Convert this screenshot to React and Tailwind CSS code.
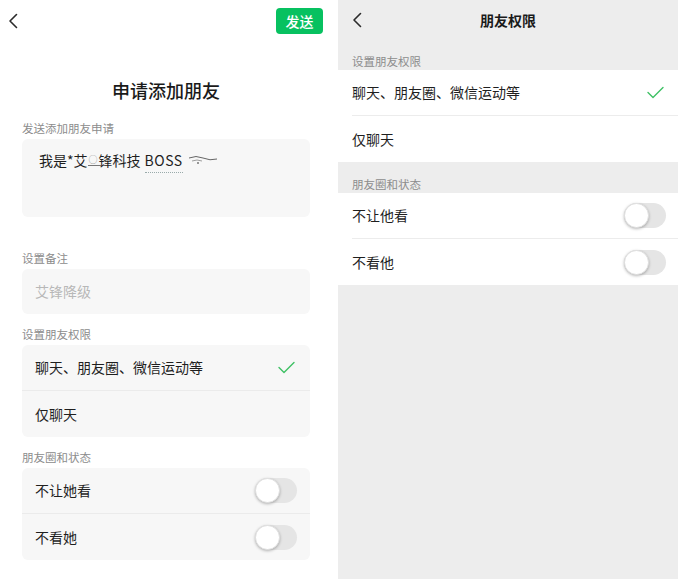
const font = { fontFamily: '"Noto Sans CJK SC", "Noto Sans", sans-serif' }

function Chevron() {
    return (
        <svg width="10" height="16" viewBox="0 0 10 16" fill="none">
            <path d="M8.5 1.5 L2 8 L8.5 14.5" stroke="#2b2b2b" strokeWidth="1.6" strokeLinecap="round" strokeLinejoin="round" />
        </svg>
    )
}

function Check() {
    return (
        <svg width="17" height="13" viewBox="0 0 17 13" fill="none">
            <path d="M1 6.5 L6 11.5 L16 1.5" stroke="#3fc165" strokeWidth="1.4" strokeLinecap="round" strokeLinejoin="round" />
        </svg>
    )
}

function Toggle() {
    return (
        <div className="w-[42px] h-[25px] rounded-full bg-[#e5e5e5] flex items-center">
            <div className="w-[25px] h-[25px] rounded-full bg-white shadow-[0_1px_3px_rgba(0,0,0,0.28)] border border-[#e0e0e0]" />
        </div>
    )
}

function Label({ children }) {
    return <div className="h-[16px] leading-[16px] text-[11.5px] text-[#8c8c8c] mb-[3px]">{children}</div>
}

function LeftRow({ text, right, divider }) {
    return (
        <div className={"h-[46px] flex items-center justify-between pl-[13px] pr-[13px] " + (divider ? "border-b border-[#ebebeb]" : "")}>
            <span className="text-[14px] text-[#1f1f1f]">{text}</span>
            {right}
        </div>
    )
}

function RightRow({ text, right, divider }) {
    return (
        <div className="pl-[14px]">
            <div className={"h-[46px] flex items-center justify-between pr-[12px] " + (divider ? "border-b border-[#ececec]" : "")}>
                <span className="text-[14px] text-[#1f1f1f]">{text}</span>
                {right}
            </div>
        </div>
    )
}

export default function App() {
    return (
        <div className="w-[678px] h-[579px] flex bg-white overflow-hidden" style={font}>
            <div className="w-[338px] h-full bg-white flex flex-col">
                <div className="h-[42px] flex items-start justify-between pl-[8px] pr-[15px]">
                    <div className="mt-[13px]"><Chevron /></div>
                    <button className="mt-[8px] w-[47px] h-[26px] rounded-[4px] bg-[#07c160] text-white text-[14px] font-medium">
                        发送
                    </button>
                </div>

                <div className="mt-[35px] h-[26px] leading-[26px] text-center pr-[6px] text-[18px] font-medium text-[#1a1a1a]">
                    申请添加朋友
                </div>

                <div className="pl-[22px] pr-[28px] mt-[17px] flex flex-col">
                    <Label>发送添加朋友申请</Label>
                    <div className="h-[78px] rounded-[6px] bg-[#f7f7f7] pt-[11px] pl-[17px]">
                        <div className="flex items-center h-[20px] text-[14px] text-[#1f1f1f]">
                            <span>我是*艾</span>
                            <span className="relative inline-flex items-center">
                                <span className="text-[9px] text-[#999] px-[1px]">○</span>
                                <span className="absolute left-0 right-[-2px] bottom-[1px] border-b border-[#777]" />
                            </span>
                            <span>锋科技 </span>
                            <span className="relative ml-[4px] tracking-[0.5px]">
                                BOSS
                                <span className="absolute left-0 right-0 bottom-[-2px] border-b border-dotted border-[#9aa]" />
                            </span>
                            <svg width="30" height="12" viewBox="0 0 30 12" className="ml-[5px]">
                                <path d="M1 4 Q8 1 15 4 T29 5" stroke="#666" strokeWidth="1" fill="none" />
                                <path d="M4 7 Q9 5 14 7" stroke="#888" strokeWidth="0.8" fill="none" />
                                <circle cx="10" cy="9" r="1" fill="#777" />
                            </svg>
                        </div>
                    </div>

                    <div className="mt-[33px]">
                        <Label>设置备注</Label>
                    </div>
                    <div className="h-[45px] rounded-[6px] bg-[#f7f7f7] pl-[13px] flex items-center">
                        <span className="text-[14px] text-[#b8b8b8]">艾锋降级</span>
                    </div>

                    <div className="mt-[12px]">
                        <Label>设置朋友权限</Label>
                    </div>
                    <div className="rounded-[6px] bg-[#f7f7f7] flex flex-col">
                        <LeftRow text="聊天、朋友圈、微信运动等" right={<span className="mr-[2px]"><Check /></span>} divider />
                        <LeftRow text="仅聊天" />
                    </div>

                    <div className="mt-[12px]">
                        <Label>朋友圈和状态</Label>
                    </div>
                    <div className="rounded-[6px] bg-[#f7f7f7] flex flex-col">
                        <LeftRow text="不让她看" right={<Toggle />} divider />
                        <LeftRow text="不看她" right={<Toggle />} />
                    </div>
                </div>
            </div>

            <div className="flex-1 h-full bg-[#ededed] flex flex-col">
                <div className="h-[40px] flex items-center pl-[14px] pr-[14px]">
                    <div className="w-[20px]"><Chevron /></div>
                    <div className="flex-1 text-center text-[14px] font-bold text-[#1a1a1a]">朋友权限</div>
                    <div className="w-[20px]" />
                </div>
                <div className="h-[30px] pl-[14px] pt-[13px] text-[11.5px] leading-[16px] text-[#8c8c8c]">设置朋友权限</div>
                <div className="bg-white flex flex-col">
                    <RightRow text="聊天、朋友圈、微信运动等" right={<span className="mr-[2px]"><Check /></span>} divider />
                    <RightRow text="仅聊天" />
                </div>
                <div className="h-[31px] pl-[14px] pt-[14px] text-[11.5px] leading-[16px] text-[#8c8c8c]">朋友圈和状态</div>
                <div className="bg-white flex flex-col">
                    <RightRow text="不让他看" right={<Toggle />} divider />
                    <RightRow text="不看他" right={<Toggle />} />
                </div>
            </div>
        </div>
    )
}
